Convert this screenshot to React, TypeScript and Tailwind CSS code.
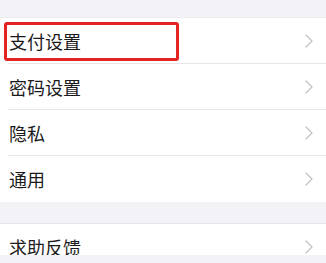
const items = ["支付设置", "密码设置", "隐私", "通用"];

const Chevron = () => (
  <svg width="8" height="14" viewBox="0 0 8 14" fill="none" className="shrink-0">
    <path d="M1 1l6 6-6 6" stroke="#c4c4c8" strokeWidth="1.4" strokeLinecap="round" strokeLinejoin="round" />
  </svg>
);

const Row = ({ label, highlight, last }: { label: string; highlight?: boolean; last?: boolean }) => (
  <div className="relative flex h-[46px] items-center bg-white pl-[9px] pr-[13px]">
    {highlight && (
      <div className="absolute left-[4px] top-[4px] h-[39px] w-[175px] rounded-[3px] border-[3px] border-[#e22424]" />
    )}
    <span className="flex-1 text-[18px] leading-none text-[#1b1b1b]">{label}</span>
    <Chevron />
    {!last && <div className="absolute bottom-0 left-2 right-0 h-px bg-[#e6e6ea]" />}
  </div>
);

export default function App() {
  return (
    <div
      className="relative h-[263px] w-[326px] overflow-hidden bg-[#f3f3f7]"
      style={{ fontFamily: '"Noto Sans CJK SC", "Noto Sans", sans-serif' }}
    >
      <div className="h-[18px] border-b border-[#ececf0]" />
      {items.map((t, i) => (
        <Row key={t} label={t} highlight={i === 0} last={i === items.length - 1} />
      ))}
      <div className="h-[22px] border-b border-[#e6e6ea]" />
      <Row label="求助反馈" last />
      <div className="absolute bottom-0 left-0 right-0 h-[8px] bg-[#f3f3f7]" />
    </div>
  );
}
